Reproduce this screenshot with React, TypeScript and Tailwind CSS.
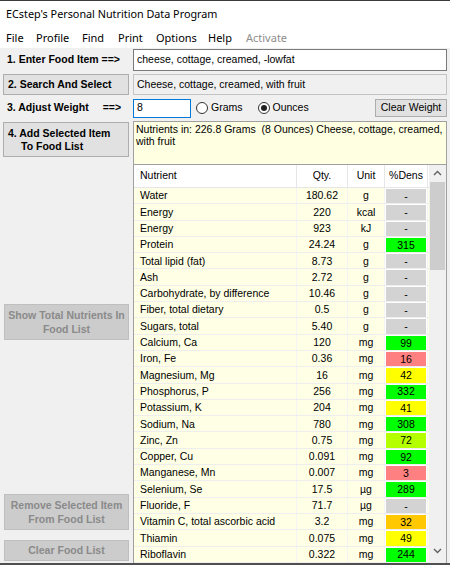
import React from 'react';

type Row = { name: string; qty: string; unit: string; dens: string; color: string };

const gray = 'bg-[#d3d3d3]';
const green = 'bg-[#00ff00]';
const red = 'bg-[#ff8080]';
const yellow = 'bg-[#ffff00]';
const lime = 'bg-[#b4ff00]';
const orange = 'bg-[#ffc800]';

const rows: Row[] = [
  { name: 'Water', qty: '180.62', unit: 'g', dens: '-', color: gray },
  { name: 'Energy', qty: '220', unit: 'kcal', dens: '-', color: gray },
  { name: 'Energy', qty: '923', unit: 'kJ', dens: '-', color: gray },
  { name: 'Protein', qty: '24.24', unit: 'g', dens: '315', color: green },
  { name: 'Total lipid (fat)', qty: '8.73', unit: 'g', dens: '-', color: gray },
  { name: 'Ash', qty: '2.72', unit: 'g', dens: '-', color: gray },
  { name: 'Carbohydrate, by difference', qty: '10.46', unit: 'g', dens: '-', color: gray },
  { name: 'Fiber, total dietary', qty: '0.5', unit: 'g', dens: '-', color: gray },
  { name: 'Sugars, total', qty: '5.40', unit: 'g', dens: '-', color: gray },
  { name: 'Calcium, Ca', qty: '120', unit: 'mg', dens: '99', color: green },
  { name: 'Iron, Fe', qty: '0.36', unit: 'mg', dens: '16', color: red },
  { name: 'Magnesium, Mg', qty: '16', unit: 'mg', dens: '42', color: yellow },
  { name: 'Phosphorus, P', qty: '256', unit: 'mg', dens: '332', color: green },
  { name: 'Potassium, K', qty: '204', unit: 'mg', dens: '41', color: yellow },
  { name: 'Sodium, Na', qty: '780', unit: 'mg', dens: '308', color: green },
  { name: 'Zinc, Zn', qty: '0.75', unit: 'mg', dens: '72', color: lime },
  { name: 'Copper, Cu', qty: '0.091', unit: 'mg', dens: '92', color: green },
  { name: 'Manganese, Mn', qty: '0.007', unit: 'mg', dens: '3', color: red },
  { name: 'Selenium, Se', qty: '17.5', unit: 'µg', dens: '289', color: green },
  { name: 'Fluoride, F', qty: '71.7', unit: 'µg', dens: '-', color: gray },
  { name: 'Vitamin C, total ascorbic acid', qty: '3.2', unit: 'mg', dens: '32', color: orange },
  { name: 'Thiamin', qty: '0.075', unit: 'mg', dens: '49', color: yellow },
  { name: 'Riboflavin', qty: '0.322', unit: 'mg', dens: '244', color: green },
];

const menu = [
  { label: 'File', w: 'w-[30px]' },
  { label: 'Profile', w: 'w-[46px]' },
  { label: 'Find', w: 'w-[36px]' },
  { label: 'Print', w: 'w-[38px]' },
  { label: 'Options', w: 'w-[52px]' },
  { label: 'Help', w: 'w-[38px]' },
];

const Radio = ({ checked, label }: { checked?: boolean; label: string }) => (
  <div className="flex items-center gap-[3px]">
    <span className="w-[12px] h-[12px] rounded-full border border-[#333] bg-white flex items-center justify-center">
      {checked && <span className="w-[6px] h-[6px] rounded-full bg-[#222]" />}
    </span>
    <span>{label}</span>
  </div>
);

const DisabledButton = ({ children, className }: { children: React.ReactNode; className: string }) => (
  <div
    className={
      'ml-[4px] w-[125px] bg-[#cccccc] border border-[#bfbfbf] text-[#8a8a8a] font-bold flex flex-col items-center justify-center leading-[14px] ' +
      className
    }
  >
    {children}
  </div>
);

export default function App() {
  return (
    <div
      className="w-[450px] h-[565px] overflow-hidden flex flex-col bg-[#f0f0f0] text-black"
      style={{ fontFamily: '"Liberation Sans", Arial, sans-serif' }}
    >
      {/* title + menu */}
      <div className="bg-white border-t border-[#3c3c3c]" style={{ fontFamily: '"Noto Sans", sans-serif' }}>
        <div className="h-[27px] flex items-center pl-[6px] text-[10.8px]">ECstep's Personal Nutrition Data Program</div>
        <div className="h-[20px] flex items-center pl-[6px] text-[11px]">
          {menu.map((m) => (
            <span key={m.label} className={m.w}>
              {m.label}
            </span>
          ))}
          <span className="text-[#8d8d8d]">Activate</span>
        </div>
      </div>

      {/* form */}
      <div className="flex-1 flex flex-col text-[10.5px]">
        <div className="h-[22px] mt-[1px] flex">
          <div className="w-[133px] pl-[7px] flex items-center font-bold">1. Enter Food Item ==&gt;</div>
          <div className="w-[314px] bg-white border border-[#7a7a7a] flex items-center pl-[3px]">
            cheese, cottage, creamed, -lowfat
          </div>
        </div>

        <div className="h-[21px] mt-[3px] flex">
          <div className="w-[133px] pl-[3px] pr-[4px]">
            <div className="h-full bg-[#e1e1e1] border border-[#adadad] flex items-center pl-[4px] font-bold">
              2. Search And Select
            </div>
          </div>
          <div className="w-[314px] bg-[#f0f0f0] border border-[#c4c4c4] flex items-center pl-[3px]">
            Cheese, cottage, creamed, with fruit
          </div>
        </div>

        <div className="h-[20px] mt-[3px] flex">
          <div className="w-[133px] pl-[7px] flex items-center font-bold">
            3. Adjust Weight<span className="ml-[14px]">==&gt;</span>
          </div>
          <div className="w-[314px] flex items-center">
            <div className="w-[58px] h-[19px] bg-white border border-[#0078d7] flex items-center pl-[3px]">8</div>
            <div className="ml-[5px]">
              <Radio label="Grams" />
            </div>
            <div className="ml-[15px]">
              <Radio checked label="Ounces" />
            </div>
            <div className="ml-auto h-[18px] w-[72px] bg-[#e1e1e1] border border-[#adadad] flex items-center justify-center">
              Clear Weight
            </div>
          </div>
        </div>

        <div className="h-[43px] mt-[3px] flex">
          <div className="w-[133px] pl-[3px] pr-[4px] pt-[1px]">
            <div className="h-[35px] bg-[#e1e1e1] border border-[#adadad] flex flex-col justify-center pl-[4px] font-bold leading-[13px]">
              <span>4. Add Selected Item</span>
              <span className="pl-[13px]">To Food List</span>
            </div>
          </div>
          <div className="w-[314px] bg-[#ffffe1] border border-[#a0a0a0] border-b-0 px-[2px] pt-[1px] leading-[12px]">
            Nutrients in: 226.8 Grams&nbsp; (8 Ounces) Cheese, cottage, creamed, with fruit
          </div>
        </div>

        {/* lower section */}
        <div className="flex-1 flex min-h-0">
          <div className="w-[133px] flex flex-col">
            <DisabledButton className="mt-[140px] h-[36px]">
              <span>Show Total Nutrients In</span>
              <span>Food List</span>
            </DisabledButton>
            <div className="flex-1" />
            <DisabledButton className="h-[36px]">
              <span>Remove Selected Item</span>
              <span>From Food List</span>
            </DisabledButton>
            <DisabledButton className="mt-[10px] mb-[2px] h-[21px]">
              <span>Clear Food List</span>
            </DisabledButton>
          </div>

          <div className="w-[314px] border border-[#a0a0a0] border-b-0 flex min-h-0 bg-[#f0f0f0]">
            <div className="w-[295px] flex flex-col min-h-0 overflow-hidden">
              <div className="h-[23px] bg-white flex shrink-0 border-b border-[#e6e6e6]">
                <div className="w-[163px] pl-[6px] flex items-center border-r border-[#e6e6e6]">Nutrient</div>
                <div className="w-[51px] flex items-center justify-center border-r border-[#e6e6e6]">Qty.</div>
                <div className="w-[37px] flex items-center justify-center border-r border-[#e6e6e6]">Unit</div>
                <div className="w-[43px] flex items-center justify-center border-r border-[#e6e6e6]">%Dens</div>
              </div>
              {rows.map((r, i) => (
                <div key={i} className="h-[16.3px] shrink-0 flex bg-[#ffffe5] border-b border-[#eeeeee]">
                  <div className="w-[163px] pl-[6px] flex items-center border-r border-[#f4f4f4] leading-none">{r.name}</div>
                  <div className="w-[51px] flex items-center justify-center border-r border-[#f4f4f4] leading-none">{r.qty}</div>
                  <div className="w-[37px] flex items-center justify-center border-r border-[#f4f4f4] leading-none">{r.unit}</div>
                  <div className="w-[43px] bg-white p-[1px] pb-0 border-r border-[#f4f4f4]">
                    <div className={'h-full flex items-center justify-center leading-none ' + r.color}>{r.dens}</div>
                  </div>
                </div>
              ))}
            </div>
            <div className="w-[17px] ml-auto flex flex-col items-center bg-[#f0f0f0]">
              <svg width="9" height="17" viewBox="0 0 9 17" className="shrink-0">
                <path d="M1 10 L4.5 6.5 L8 10" fill="none" stroke="#606060" strokeWidth="1.4" />
              </svg>
              <div className="w-[15px] h-[88px] bg-[#cdcdcd]" />
              <div className="flex-1" />
              <svg width="9" height="17" viewBox="0 0 9 17" className="shrink-0 mb-[4px]">
                <path d="M1 7 L4.5 10.5 L8 7" fill="none" stroke="#606060" strokeWidth="1.4" />
              </svg>
            </div>
          </div>
        </div>
      </div>
      <div className="h-[5px] shrink-0 bg-[#505050]" />
    </div>
  );
}
